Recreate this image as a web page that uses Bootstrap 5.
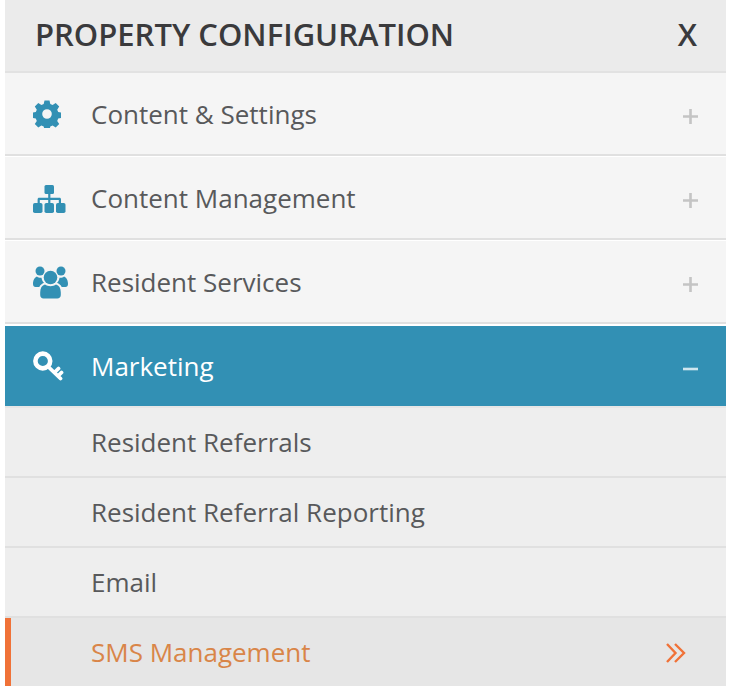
<!DOCTYPE html>
<html lang="en">
<head>
  <meta charset="UTF-8" />
  <meta name="viewport" content="width=device-width, initial-scale=1.0"/>
  <title>Property Configuration</title>
  <link href="https://cdn.jsdelivr.net/npm/bootstrap@5.3.3/dist/css/bootstrap.min.css" rel="stylesheet" />
  <style>
    body {
      background-color: #fff;
      font-family: "Open Sans", sans-serif;
      color: #555;
      overflow: hidden;
    }

    .side-menu {
      margin: 0 3px 0 5px;
    }

    .menu-title {
      height: 73px;
      padding: 0 29px 3px 30px;
      background-color: #ebebeb;
      border-bottom: 2px solid #e2e2e2;
      color: #3a3a3c;
      font-size: 31px;
      font-weight: 600;
    }

    .menu-row {
      height: 83px;
      padding: 2px 28px 0 28px;
      background-color: #f5f5f5;
      border-bottom: 2px solid #e0e0e0;
      margin-bottom: 1px;
      font-size: 26px;
      color: #58595b;
    }

    .menu-row.is-open {
      height: 82px;
      padding-top: 0;
      margin-top: 2px;
      margin-bottom: 0;
      background-color: #3290b4;
      background-clip: padding-box;
      border-bottom: 2px solid #e6e6e6;
      color: #fff;
    }

    .menu-icon {
      width: 58px;
      flex-shrink: 0;
    }

    .menu-icon svg {
      display: block;
    }

    .gear-icon {
      margin-top: -2px;
    }

    .menu-sign {
      width: 15px;
      height: 15px;
      margin-top: 4px;
    }

    .sub-row {
      height: 70px;
      padding: 0 40px 0 86px;
      background-color: #eee;
      border-bottom: 2px solid #e0e0e0;
      font-size: 26px;
      color: #58595b;
    }

    .sub-row:last-child {
      height: 68px;
      border-bottom: 0;
    }

    .sub-row.is-current {
      padding-left: 80px;
      background-color: #e6e6e6;
      border-left: 6px solid #f07238;
      color: #d98548;
    }

    .sub-arrow {
      margin-top: 2px;
    }
  </style>
</head>
<body>

  <div class="side-menu">
    <div class="menu-title d-flex align-items-center justify-content-between">
      <span>PROPERTY CONFIGURATION</span>
      <span>X</span>
    </div>

    <div class="menu-row d-flex align-items-center">
      <span class="menu-icon">
        <svg class="gear-icon" width="28" height="28" viewBox="0 0 28 28" fill="#3290b4">
          <path fill-rule="evenodd" d="M11.5 0.5h5l.8 3.6 2.3 1 3.1-2 3.5 3.5-2 3.1 1 2.3 3.6.8v5l-3.6.8-1 2.3 2 3.1-3.5 3.5-3.1-2-2.3 1-.8 3.6h-5l-.8-3.6-2.3-1-3.1 2-3.5-3.5 2-3.1-1-2.3-3.6-.8v-5l3.6-.8 1-2.3-2-3.1 3.5-3.5 3.1 2 2.3-1zM14 9.2a4.8 4.8 0 1 0 0 9.6 4.8 4.8 0 0 0 0-9.6z"/>
        </svg>
      </span>
      <span class="flex-grow-1">Content &amp; Settings</span>
      <svg class="menu-sign" viewBox="0 0 15 15" fill="#c4c4c4"><path d="M6.200 0h2.600v6.200H15v2.600H8.800V15H6.200V8.800H0V6.200h6.200z"/></svg>
    </div>

    <div class="menu-row d-flex align-items-center">
      <span class="menu-icon">
        <svg width="33" height="28" viewBox="0 0 33 28" fill="#3290b4">
          <rect x="11.500" y="0" width="9.500" height="9" rx="1.500"/>
          <rect x="0" y="18" width="9.500" height="10" rx="1.800"/>
          <rect x="11.500" y="18" width="9.500" height="10" rx="1.800"/>
          <rect x="23" y="18" width="9.500" height="10" rx="1.800"/>
          <path d="M15.200 9h2.200v3.800h9c1 0 1.600.6 1.600 1.600V18h-2.200v-3h-8.400v3h-2.200v-3H6.800v3H4.600v-3.600c0-1 .6-1.600 1.600-1.600h9z"/>
        </svg>
      </span>
      <span class="flex-grow-1">Content Management</span>
      <svg class="menu-sign" viewBox="0 0 15 15" fill="#c4c4c4"><path d="M6.200 0h2.600v6.200H15v2.600H8.800V15H6.200V8.800H0V6.200h6.200z"/></svg>
    </div>

    <div class="menu-row d-flex align-items-center">
      <span class="menu-icon">
        <svg width="35" height="33" viewBox="0 0 35 33" fill="#3290b4">
          <circle cx="7" cy="5" r="4.500"/>
          <circle cx="28" cy="5" r="4.500"/>
          <circle cx="17.500" cy="11.500" r="6.800"/>
          <path d="M4 10.500c1.500 1.300 3 1.500 4.500 1.300.3 2 1 3.700 2.500 5-2 .8-3.800 2.300-4.700 4.200H2.500C1 21 0 19.800 0 18c0-3 1.200-6.500 4-7.500z"/>
          <path d="M31 10.500c-1.500 1.300-3 1.500-4.500 1.300-.3 2-1 3.700-2.500 5 2 .8 3.800 2.300 4.700 4.200h3.800c1.500 0 2.500-1.200 2.500-3 0-3-1.200-6.500-4-7.500z"/>
          <path d="M12 18.500c3 2.300 8 2.300 11 0 3 .8 4.800 3.500 4.800 8v2.500c0 2-1.500 3.500-3.500 3.500H10.500c-2 0-3.300-1.500-3.300-3.500v-2.500c0-4.500 1.800-7.200 4.800-8z"/>
        </svg>
      </span>
      <span class="flex-grow-1">Resident Services</span>
      <svg class="menu-sign" viewBox="0 0 15 15" fill="#c4c4c4"><path d="M6.200 0h2.600v6.200H15v2.600H8.800V15H6.200V8.800H0V6.200h6.200z"/></svg>
    </div>

    <div class="menu-row is-open d-flex align-items-center">
      <span class="menu-icon">
        <svg width="31" height="30" viewBox="0 0 31 30" fill="none" stroke="#fff" stroke-linecap="round">
          <circle cx="9.800" cy="10" r="7.400" stroke-width="4.600"/>
          <path d="M15 15.500 27.500 27.500M21.500 21.500 25.500 17.500M25 25 28.500 21.500" stroke-width="3.800"/>
        </svg>
      </span>
      <span class="flex-grow-1">Marketing</span>
      <svg class="menu-sign" viewBox="0 0 15 15" fill="#cfe6ef"><rect x="0" y="6.700" width="15" height="2.600"/></svg>
    </div>

    <div class="sub-row d-flex align-items-center">Resident Referrals</div>
    <div class="sub-row d-flex align-items-center">Resident Referral Reporting</div>
    <div class="sub-row d-flex align-items-center">Email</div>
    <div class="sub-row is-current d-flex align-items-center justify-content-between">
      <span>SMS Management</span>
      <svg class="sub-arrow" width="20" height="20" viewBox="0 0 20 20" fill="none" stroke="#f07238" stroke-width="2.400"><path d="M1 1l8.500 9L1 19M9 1l9 9-9 9"/></svg>
    </div>
  </div>

</body>
</html>
